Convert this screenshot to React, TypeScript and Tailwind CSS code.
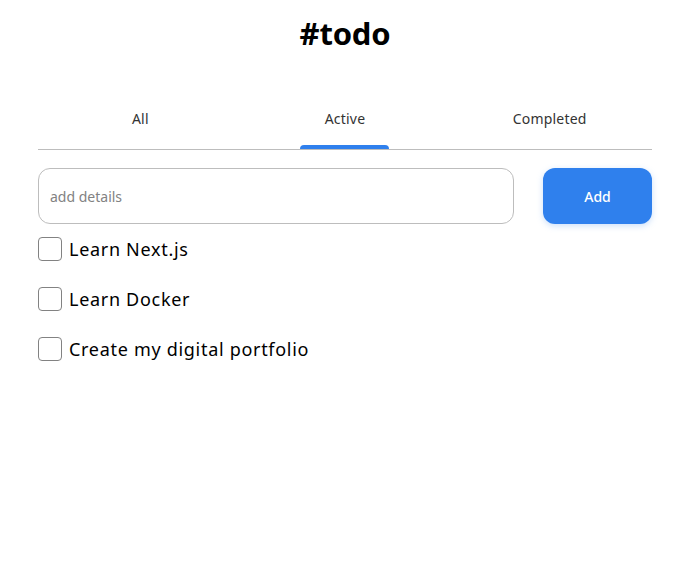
import React from "react";

const font = { fontFamily: '"Noto Sans", "Open Sans", sans-serif' };

export default function App() {
  const todos = ["Learn Next.js", "Learn Docker", "Create my digital portfolio"];
  return (
    <div className="w-[684px] h-[577px] bg-white text-black" style={font}>
      <div className="mx-[38px] w-[614px]">
        <h1 className="pt-[14px] text-center text-[31px] font-bold leading-[38px] tracking-[-0.2px]">#todo</h1>
        <div className="mt-[57px] grid grid-cols-3 border-b border-[#bdbdbd]">
          <div className="flex flex-col items-center">
            <span className="text-[14px] leading-[20px] text-[#333333] font-normal tracking-[0.2px]">All</span>
            <div className="mt-[16px] h-[4px] w-[89px]" />
          </div>
          <div className="flex flex-col items-center">
            <span className="text-[14px] leading-[20px] text-[#333333] font-normal tracking-[0.2px]">Active</span>
            <div className="mt-[16px] h-[4px] w-[89px] rounded-t-[4px] bg-[#2f80ed]" />
          </div>
          <div className="flex flex-col items-center">
            <span className="text-[14px] leading-[20px] text-[#333333] font-normal tracking-[0.2px]">Completed</span>
            <div className="mt-[16px] h-[4px] w-[89px]" />
          </div>
        </div>
        <div className="mt-[18px] flex items-center gap-[29px]">
          <input
            placeholder="add details"
            className="h-[56px] w-[476px] rounded-[12px] border border-[#bdbdbd] px-[11px] text-[14px] placeholder:text-[#828282] outline-none"
            style={font}
          />
          <button
            className="h-[56px] w-[109px] rounded-[12px] bg-[#2f80ed] text-[14px] font-medium text-white shadow-[0_2px_6px_rgba(127,177,243,0.4)]"
            style={font}
          >
            Add
          </button>
        </div>
        <div className="mt-[13px] flex flex-col gap-[26px]">
          {todos.map((t) => (
            <label key={t} className="flex items-center gap-[7px]">
              <span className="h-[24px] w-[24px] rounded-[4px] border border-[#828282] bg-white" />
              <span className="text-[18px] leading-[24px] font-normal tracking-[0.7px]">{t}</span>
            </label>
          ))}
        </div>
      </div>
    </div>
  );
}
